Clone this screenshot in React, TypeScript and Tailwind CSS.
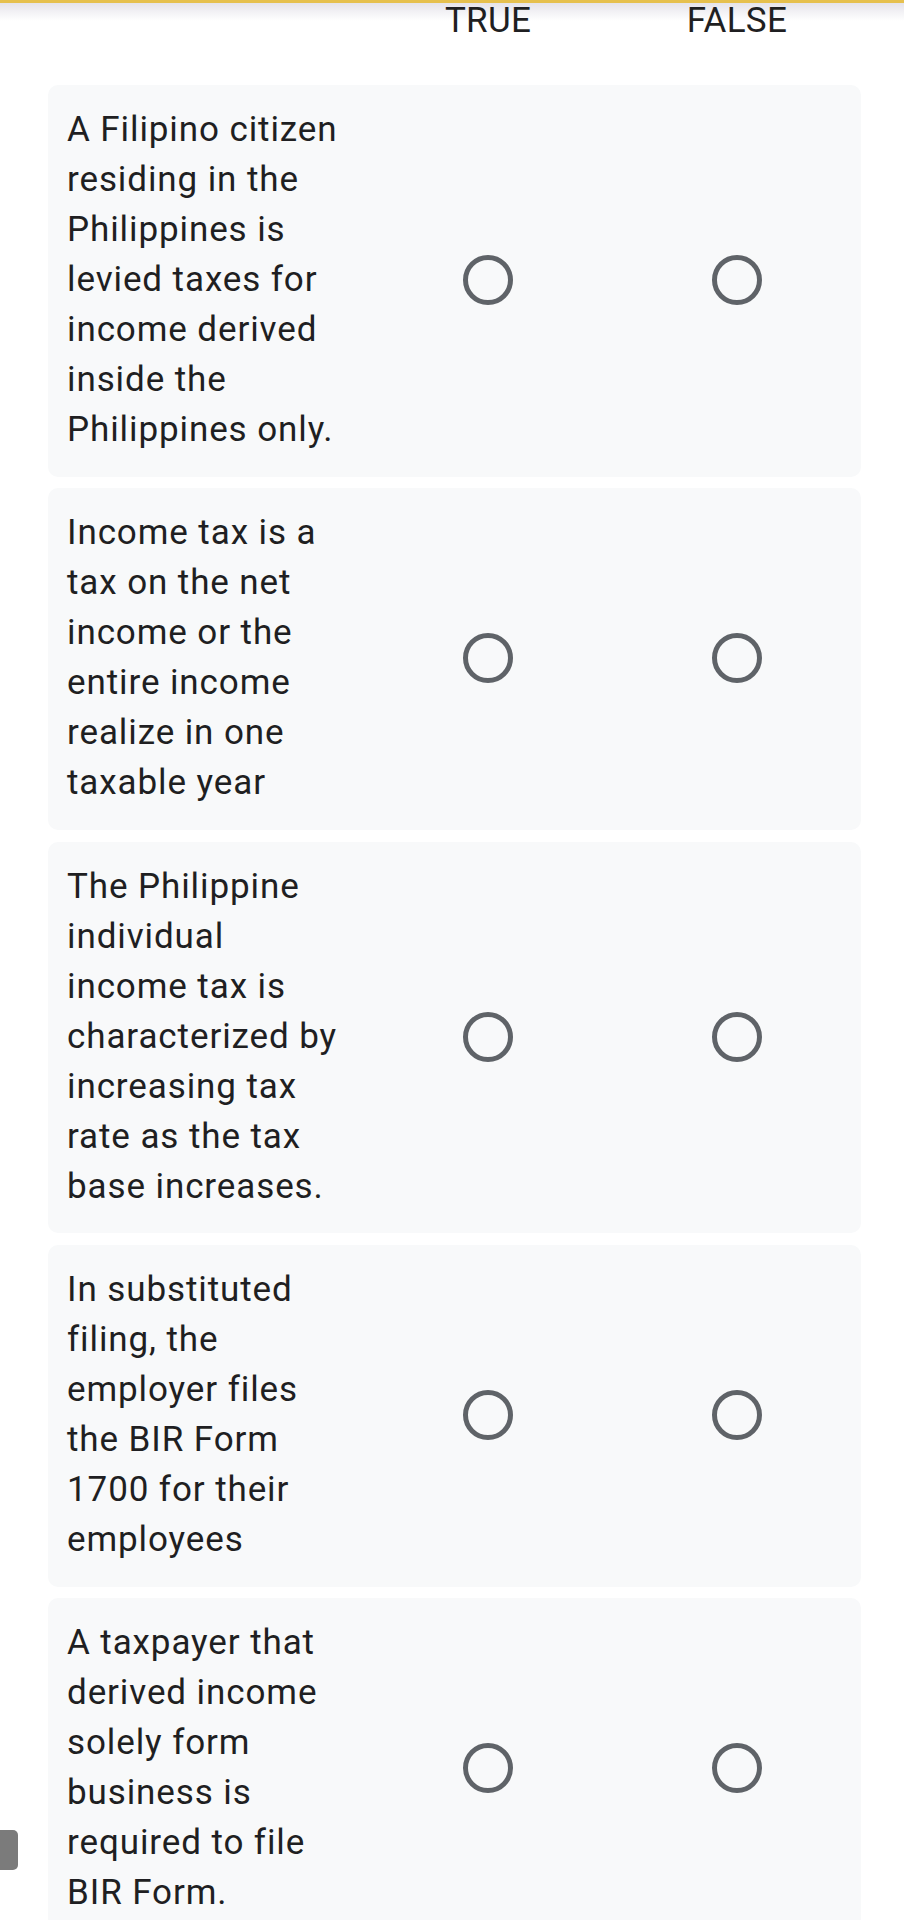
import React from 'react';

type Question = {
  id: string;
  lines: string[];
};

const questions: Question[] = [
  {
    id: 'q1',
    lines: ['A Filipino citizen', 'residing in the', 'Philippines is', 'levied taxes for', 'income derived', 'inside the', 'Philippines only.'],
  },
  {
    id: 'q2',
    lines: ['Income tax is a', 'tax on the net', 'income or the', 'entire income', 'realize in one', 'taxable year'],
  },
  {
    id: 'q3',
    lines: ['The Philippine', 'individual', 'income tax is', 'characterized by', 'increasing tax', 'rate as the tax', 'base increases.'],
  },
  {
    id: 'q4',
    lines: ['In substituted', 'filing, the', 'employer files', 'the BIR Form', '1700 for their', 'employees'],
  },
  {
    id: 'q5',
    lines: ['A taxpayer that', 'derived income', 'solely form', 'business is', 'required to file', 'BIR Form.'],
  },
];

const Radio: React.FC = () => (
  <span className="mx-auto block h-[50px] w-[50px] rounded-full border-[5px] border-[#5f6368]" />
);

const App: React.FC = () => {
  return (
    <div className="relative min-h-[1920px] overflow-hidden bg-white font-['Roboto','Liberation_Sans',sans-serif] text-[#1f1f22]">
      {/* top bar + shadow */}
      <div className="absolute inset-x-0 top-0 z-10">
        <div className="h-[3px] bg-[#e6c04e]" />
        <div className="h-[18px] bg-gradient-to-b from-[#e2e0e8] via-[#f1f0f4] to-transparent opacity-90" />
      </div>

      <div className="pl-[48px] pr-[43px]">
        <div className="relative z-20 mb-[45px] grid grid-cols-[315px_250px_248px] pt-[1px] text-[35px] leading-[40px] tracking-[0.3px]">
          <div />
          <div className="text-center">TRUE</div>
          <div className="text-center">FALSE</div>
        </div>

        <div className="-mt-[1px] flex flex-col gap-[11.6px]">
          {questions.map((q) => (
            <div
              key={q.id}
              className="grid grid-cols-[315px_250px_248px] items-center rounded-[10px] bg-[#f8f9fa] pb-[21.7px] pt-[20px]"
            >
              <div className="pl-[19px] text-[35px] leading-[50px] tracking-[0.9px]">
                {q.lines.map((line, i) => (
                  <div key={i} className="whitespace-nowrap">
                    {line}
                  </div>
                ))}
              </div>
              <Radio />
              <Radio />
            </div>
          ))}
        </div>
      </div>

      {/* fast-scroll handle */}
      <div className="absolute left-0 top-[1830px] h-[40px] w-[18px] rounded-r-[5px] bg-[#7b7b7b]" />
    </div>
  );
};

export default App;
